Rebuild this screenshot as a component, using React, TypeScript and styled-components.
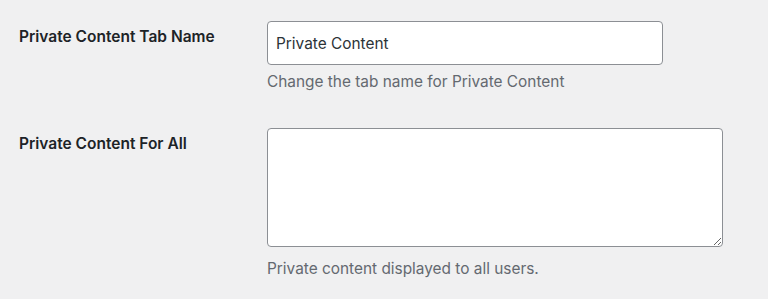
import React from "react";
import styled, { createGlobalStyle } from "styled-components";

const GlobalStyle = createGlobalStyle`
  html, body {
    margin: 0;
    padding: 0;
    background: #f0f0f1;
  }
  body {
    font-family: Inter, "Noto Sans", sans-serif;
    color: #1d2327;
  }
`;

const FormTable = styled.div`
  padding: 21px 0 0 19px;
  display: flex;
  flex-direction: column;
  gap: 36px;
`;

const Row = styled.div`
  display: grid;
  grid-template-columns: 248px 1fr;
  align-items: start;
`;

const Label = styled.label`
  font-size: 15.5px;
  font-weight: 600;
  line-height: 20px;
  padding-top: 6px;
  color: #1d2327;
`;

const Field = styled.div`
  display: flex;
  flex-direction: column;
`;

const TextInput = styled.input`
  box-sizing: border-box;
  width: 396px;
  height: 44px;
  padding: 0 8px;
  border: 1px solid #8c8f94;
  border-radius: 4px;
  background: #fff;
  font-family: inherit;
  font-size: 15.4px;
  color: #2c3338;
  outline: none;
`;

const TextArea = styled.textarea`
  box-sizing: border-box;
  width: 456px;
  height: 119px;
  padding: 6px 8px;
  border: 1px solid #8c8f94;
  border-radius: 4px;
  background: #fff;
  font-family: inherit;
  font-size: 15.4px;
  color: #2c3338;
  resize: vertical;
  outline: none;
  display: block;
`;

const Description = styled.p<{ $gap: number }>`
  margin: ${(p) => p.$gap}px 0 0;
  font-size: 15.4px;
  line-height: 20px;
  color: #646970;
`;

export default function App() {
  return (
    <>
      <GlobalStyle />
      <FormTable>
        <Row>
          <Label htmlFor="tab-name">Private Content Tab Name</Label>
          <Field>
            <TextInput id="tab-name" type="text" defaultValue="Private Content" />
            <Description $gap={7}>Change the tab name for Private Content</Description>
          </Field>
        </Row>
        <Row>
          <Label htmlFor="content-all">Private Content For All</Label>
          <Field>
            <TextArea id="content-all" />
            <Description $gap={12}>Private content displayed to all users.</Description>
          </Field>
        </Row>
      </FormTable>
    </>
  );
}
